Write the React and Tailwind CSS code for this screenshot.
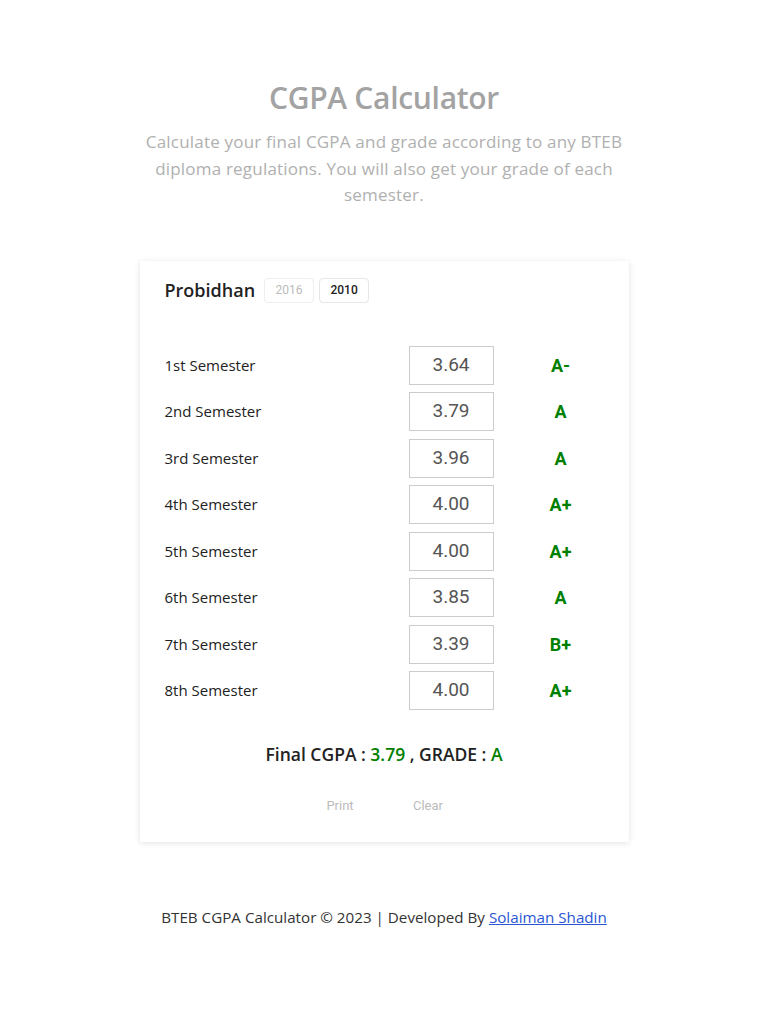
import React from "react";

const rows = [
  ["1st Semester", "3.64", "A-"],
  ["2nd Semester", "3.79", "A"],
  ["3rd Semester", "3.96", "A"],
  ["4th Semester", "4.00", "A+"],
  ["5th Semester", "4.00", "A+"],
  ["6th Semester", "3.85", "A"],
  ["7th Semester", "3.39", "B+"],
  ["8th Semester", "4.00", "A+"],
];

export default function App() {
  return (
    <div className="min-h-[1024px] w-full bg-white font-['Open_Sans',sans-serif]">
      <div className="flex flex-col items-center pt-[74px]">
        <h1 className="text-[30px] leading-[48px] font-semibold text-[#a3a3a3] tracking-[-0.3px]">CGPA Calculator</h1>
        <p className="mt-[7px] w-[500px] text-center text-[17px] leading-[26.5px] text-[#b0b0b0] tracking-[0.2px]">
          Calculate your final CGPA and grade according to any BTEB diploma regulations. You will also get your grade of each semester.
        </p>

        <div className="mt-[52px] w-[489px] bg-white shadow-[0_1px_6px_rgba(0,0,0,0.12)] px-[25px] pt-[17px] pb-[21px]">
          <div className="flex items-center h-[25px]">
            <span className="text-[18px] font-semibold text-[#222] mr-[9px]">Probidhan</span>
            <button className="h-[25px] w-[50px] rounded-[4px] border border-[#eee] text-[12px] text-[#bbb] font-['Roboto',sans-serif]">2016</button>
            <button className="ml-[5px] h-[25px] w-[50px] rounded-[4px] border border-[#e6e6e6] text-[12px] text-[#222] font-medium font-['Roboto',sans-serif]">2010</button>
          </div>

          <div className="mt-[43px] flex flex-col gap-[7.5px]">
            {rows.map(([label, val, grade]) => (
              <div key={label} className="flex items-center h-[39px]">
                <span className="w-[244px] text-[15px] text-[#222]">{label}</span>
                <div className="w-[85px] h-[39px] border border-[#ccc] flex items-center justify-center text-[19px] text-[#555] font-['Roboto',sans-serif]">
                  {val}
                </div>
                <span className="ml-[44px] w-[46px] text-center text-[18px] font-bold text-[#008000] font-['Roboto',sans-serif]">{grade}</span>
              </div>
            ))}
          </div>

          <div className="mt-[31px] text-center text-[17.5px] leading-[27px] font-semibold text-[#222]">
            Final CGPA : <span className="text-[#008000]">3.79</span> , GRADE : <span className="text-[#008000]">A</span>
          </div>

          <div className="mt-[23px] flex justify-center gap-[8px]">
            <button className="w-[80px] h-[30px] text-[13px] text-[#bbb] font-['Roboto',sans-serif]">Print</button>
            <button className="w-[80px] h-[30px] text-[13px] text-[#bbb] font-['Roboto',sans-serif]">Clear</button>
          </div>
        </div>

        <p className="mt-[64px] text-[15.2px] text-[#333]">
          BTEB CGPA Calculator © 2023 | Developed By <a href="#" className="text-[#2a55d4] underline">Solaiman Shadin</a>
        </p>
      </div>
    </div>
  );
}
